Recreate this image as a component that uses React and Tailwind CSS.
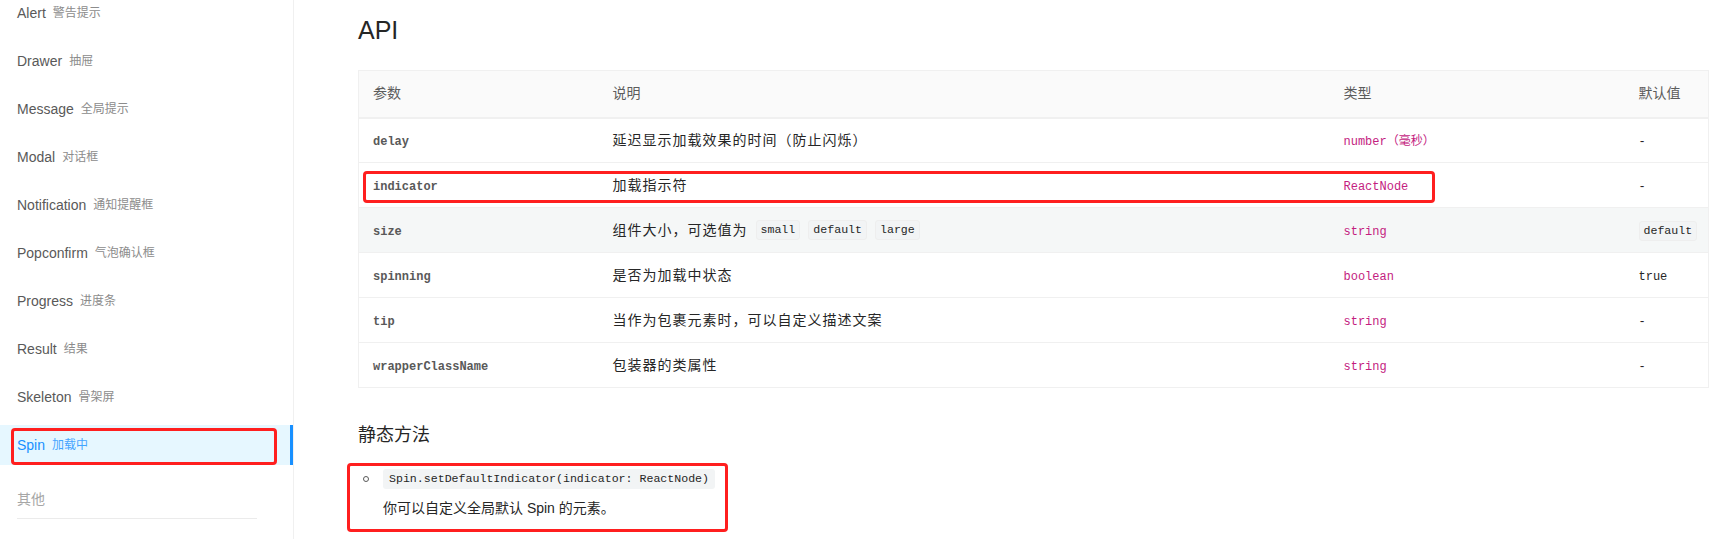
import React from "react";

const menuItems = [
  ["Alert", "警告提示"],
  ["Drawer", "抽屉"],
  ["Message", "全局提示"],
  ["Modal", "对话框"],
  ["Notification", "通知提醒框"],
  ["Popconfirm", "气泡确认框"],
  ["Progress", "进度条"],
  ["Result", "结果"],
  ["Skeleton", "骨架屏"],
  ["Spin", "加载中"],
];

const rows = [
  { name: "delay", desc: "延迟显示加载效果的时间（防止闪烁）", type: "number（毫秒）", def: "-" },
  { name: "indicator", desc: "加载指示符", type: "ReactNode", def: "-" },
  { name: "size", desc: "size", type: "string", def: "default", hover: true },
  { name: "spinning", desc: "是否为加载中状态", type: "boolean", def: "true" },
  { name: "tip", desc: "当作为包裹元素时，可以自定义描述文案", type: "string", def: "-" },
  { name: "wrapperClassName", desc: "包装器的类属性", type: "string", def: "-" },
];

const sans = "font-['Liberation_Sans','Noto_Sans_CJK_SC',sans-serif]";
const mono = "font-['Liberation_Mono','Noto_Sans_CJK_SC',monospace]";

const Code = ({ children }) => (
  <code className={`${mono} inline-block text-[11.6px] leading-[18px] px-[4px] mx-[4px] bg-[#f2f4f5] border border-[#eeeeee] rounded-[3px] text-[#262626]`}>
    {children}
  </code>
);

const Sidebar = () => {
  return (
    <div className="w-[294px] shrink-0 h-full border-r border-[#f0f0f0] overflow-hidden">
      <div className="-mt-[7px] flex flex-col gap-2">
        {menuItems.map(([en, zh]) => {
          const active = en === "Spin";
          return (
            <div
              key={en}
              className={`relative h-10 flex items-center pl-[17px] ${
                active ? "bg-[#e6f7ff] border-r-[3px] border-[#1890ff]" : ""
              }`}
            >
              <span className={`text-[14px] ${active ? "text-[#1890ff]" : "text-[#595959]"}`}>{en}</span>
              <span className={`ml-[7px] text-[12px] ${active ? "text-[#1890ff] opacity-80" : "text-[#8c8c8c]"}`}>{zh}</span>
              {active && (
                <div className="absolute top-[3px] left-[11px] w-[266px] h-[37px] border-[3px] border-[#ff1f1f] rounded-[4px]" />
              )}
            </div>
          );
        })}
      </div>
      <div className="pl-[17px] mt-[14px] h-[40px] flex items-center text-[14px] text-[#a6a6a6]">其他</div>
      <div className="ml-[17px] w-[240px] border-b border-[#ebebeb] mt-[-1px]" />
    </div>
  );
};

const ApiTable = () => {
  return (
    <div className="relative mt-[24px]">
      <table className="w-[1350px] border-collapse border border-[#f0f0f0] text-[14px] text-[#262626] table-fixed">
        <colgroup>
          <col className="w-[240px]" />
          <col className="w-[731px]" />
          <col className="w-[295px]" />
          <col className="w-[84px]" />
        </colgroup>
        <thead>
          <tr className="h-[47px] bg-[#fafafa] border-b-2 border-[#f0f0f0] text-[#5c5c5c]">
            <th className="text-left font-normal pl-[14px]">参数</th>
            <th className="text-left font-normal pl-[14px]">说明</th>
            <th className="text-left font-normal pl-[14px]">类型</th>
            <th className="text-left font-normal pl-[14px]">默认值</th>
          </tr>
        </thead>
        <tbody>
          {rows.map((r) => (
            <tr key={r.name} className={`h-[45px] border-b border-[#f0f0f0] ${r.hover ? "bg-[#f5f7f7]" : ""}`}>
              <td className={`${mono} pl-[14px] pt-[3px] text-[12px] font-bold text-[#595959]`}>{r.name}</td>
              <td className="pl-[14px] tracking-[1px]">
                {r.name === "size" ? (
                  <span className="flex items-center">
                    组件大小，可选值为
                    <span className="ml-[4px] flex tracking-normal">
                      <Code>small</Code>
                      <Code>default</Code>
                      <Code>large</Code>
                    </span>
                  </span>
                ) : (
                  r.desc
                )}
              </td>
              <td className={`${mono} pl-[14px] pt-[3px] text-[12px] text-[#c41d7f]`}>{r.type}</td>
              <td className="pl-[10px]">
                {r.def === "default" ? (
                  <Code>default</Code>
                ) : (
                  <span className={`${mono} pl-[4px] text-[12px] text-[#262626]`}>{r.def}</span>
                )}
              </td>
            </tr>
          ))}
        </tbody>
      </table>
      <div className="absolute top-[101px] left-[5px] w-[1072px] h-[32px] border-[3px] border-[#ff1f1f] rounded-[4px]" />
    </div>
  );
};

export default function App() {
  return (
    <div className={`${sans} w-[1717px] h-[539px] overflow-hidden bg-white flex`}>
      <Sidebar />
      <div className="flex-1 pl-16">
        <h2 className="mt-[14px] text-[25px] leading-[32px] text-[#262626] font-medium">API</h2>
        <ApiTable />
        <h3 className="mt-[33px] text-[18px] leading-[28px] text-[#262626] font-normal">静态方法</h3>
        <div className="relative mt-[19px]">
          <div className="flex items-center h-[22px]">
            <span className="ml-[5px] w-[6px] h-[6px] rounded-full border border-[#595959]" />
            <span className={`${mono} ml-[14px] inline-block text-[11.6px] leading-[20px] px-[6px] bg-[#f2f4f5] rounded-[3px] text-[#262626]`}>
              Spin.setDefaultIndicator(indicator: ReactNode)
            </span>
          </div>
          <p className="mt-[7px] ml-[25px] text-[14px] leading-[22px] text-[#262626]">你可以自定义全局默认 Spin 的元素。</p>
          <div className="absolute top-[-5px] left-[-11px] w-[381px] h-[69px] border-[3px] border-[#ff1f1f] rounded-[4px]" />
        </div>
      </div>
    </div>
  );
}
